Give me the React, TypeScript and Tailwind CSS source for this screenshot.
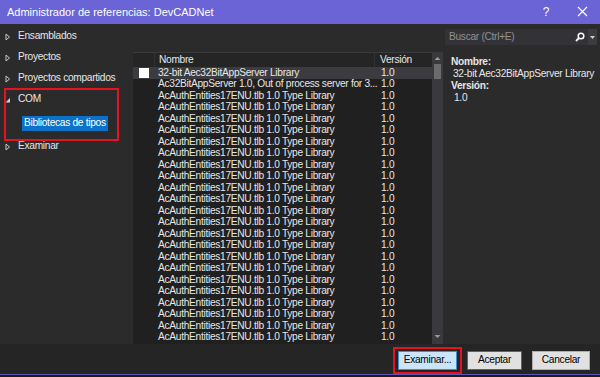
import React from "react";

const rows: string[] = [
    "32-bit Aec32BitAppServer Library",
    "Ac32BitAppServer 1.0, Out of process server for 3...",
    ...Array.from({ length: 23 }, () => "AcAuthEntities17ENU.tlb 1.0 Type Library"),
];

function Arrow() {
    return (
        <svg width="6" height="8" viewBox="0 0 6 8" className="shrink-0">
            <path d="M1 1 L4.5 4 L1 7 Z" fill="none" stroke="#c8c8c8" strokeWidth="1" />
        </svg>
    );
}

function Expanded() {
    return (
        <svg width="6" height="8" viewBox="0 0 6 8" className="shrink-0">
            <path d="M5 2 L5 6.5 L0.5 6.5 Z" fill="#d0d0d0" />
        </svg>
    );
}

function NavItem({ label, open }: { label: string; open?: boolean }) {
    return (
        <div className="h-[21px] flex items-center pl-[5px] gap-[7px] text-[#e6e6e6]">
            {open ? <Expanded /> : <Arrow />}
            <span>{label}</span>
        </div>
    );
}

export default function App() {
    return (
        <div
            className="w-[600px] h-[377px] flex flex-col bg-[#2b2b2c] text-[10.2px] tracking-[-0.3px] leading-none overflow-hidden"
            style={{ fontFamily: '"Liberation Sans", Arial, sans-serif' }}
        >
            {/* Title bar */}
            <div className="h-[24px] shrink-0 bg-[#6a64d6] flex items-center justify-between pl-[7px] text-white tracking-normal">
                <span className="text-[11px]">Administrador de referencias: DevCADNet</span>
                <div className="flex items-center">
                    <span className="w-[36px] text-center text-[12px]">?</span>
                    <svg width="36" height="12" viewBox="0 0 36 12">
                        <path d="M14 1 L23 10 M23 1 L14 10" stroke="#ffffff" strokeWidth="1.2" />
                    </svg>
                </div>
            </div>

            {/* Body */}
            <div className="flex-1 flex min-h-0">
                {/* Left nav */}
                <div className="w-[133px] shrink-0 pt-[2px]">
                    <NavItem label="Ensamblados" />
                    <NavItem label="Proyectos" />
                    <NavItem label="Proyectos compartidos" />
                    <div className="relative">
                        <NavItem label="COM" open />
                        <div className="h-[26px] flex items-center pl-[22px]">
                            <span className="bg-[#0a73c9] text-white px-[2px] h-[15px] flex items-center">
                                Bibliotecas de tipos
                            </span>
                        </div>
                        <div className="absolute left-[4px] top-[-1px] w-[115px] h-[53px] border-2 border-[#e5131d]" />
                    </div>
                    <NavItem label="Examinar" />
                </div>

                {/* List */}
                <div className="w-[310px] shrink-0 pt-[28px] flex flex-col">
                    <div className="flex-1 flex bg-[#202021] min-h-0 overflow-hidden">
                        <div className="flex-1 flex flex-col min-w-0">
                            <div className="h-[15px] shrink-0 flex border-t border-[#3a3a3d] bg-[#252526] text-[#e6e6e6]">
                                <div className="w-[22px] border-r border-[#333337]" />
                                <div className="w-[220px] pl-[4px] flex items-center border-r border-[#333337]">Nombre</div>
                                <div className="flex-1 pl-[5px] flex items-center">Versión</div>
                            </div>
                            {rows.map((r, i) => (
                                <div
                                    key={i}
                                    className={`h-[11.5px] shrink-0 flex items-center text-[#e6e6e6] ${i === 0 ? "bg-[#3c3c40]" : ""}`}
                                >
                                    <div className="w-[22px] flex items-center justify-center">
                                        {i === 0 && <div className="w-[10px] h-[10px] bg-white" />}
                                    </div>
                                    <div className="w-[220px] pl-[3px] whitespace-nowrap">{r}</div>
                                    <div className="flex-1 pl-[6px]">1.0</div>
                                </div>
                            ))}
                        </div>
                        {/* Scrollbar */}
                        <div className="w-[11px] shrink-0 bg-[#3a3a3e] flex flex-col items-center">
                            <svg width="7" height="10" viewBox="0 0 7 10" className="mt-[2px]">
                                <path d="M0.5 6 L3.5 3 L6.5 6 Z" fill="#9a9a9a" />
                            </svg>
                            <div className="w-[7px] h-[15px] bg-[#6b6b6e]" />
                            <div className="flex-1" />
                            <svg width="7" height="10" viewBox="0 0 7 10" className="mb-[3px]">
                                <path d="M0.5 4 L3.5 7 L6.5 4 Z" fill="#9a9a9a" />
                            </svg>
                        </div>
                    </div>
                </div>

                {/* Right panel */}
                <div className="flex-1 flex flex-col pl-[2px] pr-[3px] pt-[5px]">
                    <div className="h-[16px] bg-[#333337] flex items-center">
                        <span className="flex-1 pl-[4px] text-[#8f8f94]">Buscar (Ctrl+E)</span>
                        <svg width="10" height="10" viewBox="0 0 10 10" className="mr-[3px]">
                            <circle cx="6" cy="4" r="2.8" fill="none" stroke="#ffffff" strokeWidth="1.5" />
                            <path d="M4 6 L1 9" stroke="#ffffff" strokeWidth="1.8" />
                        </svg>
                        <div className="w-[9px] h-full bg-[#3b3b40] flex items-center justify-center">
                            <svg width="5" height="3" viewBox="0 0 5 3">
                                <path d="M0 0 L5 0 L2.5 3 Z" fill="#d0d0d0" />
                            </svg>
                        </div>
                    </div>
                    <div className="pl-[6px] pt-[12px] text-[#e6e6e6] flex flex-col whitespace-nowrap">
                        <div className="h-[12px] font-bold">Nombre:</div>
                        <div className="h-[12px] pl-[2px]">32-bit Aec32BitAppServer Library</div>
                        <div className="h-[12px] font-bold">Versión:</div>
                        <div className="h-[12px] pl-[3px]">1.0</div>
                    </div>
                </div>
            </div>

            {/* Bottom bar */}
            <div className="h-[30px] shrink-0 bg-[#252526] flex items-start justify-end pt-[7px] pr-[10px] gap-[10px] text-black">
                <div className="relative">
                    <button className="w-[59px] h-[19px] bg-[#cce4f7] border border-[#3c8fd6]">Examinar...</button>
                    <div className="absolute left-[-5px] top-[-4px] w-[69px] h-[27px] border-2 border-[#e5131d]" />
                </div>
                <button className="w-[55px] h-[19px] bg-[#e1e1e1] border border-[#1d73c0]">Aceptar</button>
                <button className="w-[58px] h-[19px] bg-[#e1e1e1] border border-[#adadad]">Cancelar</button>
            </div>
            <div className="h-[1px] shrink-0 bg-[#5d58b5]" />
            <div className="h-[2px] shrink-0 bg-[#1c1c1c]" />
        </div>
    );
}
